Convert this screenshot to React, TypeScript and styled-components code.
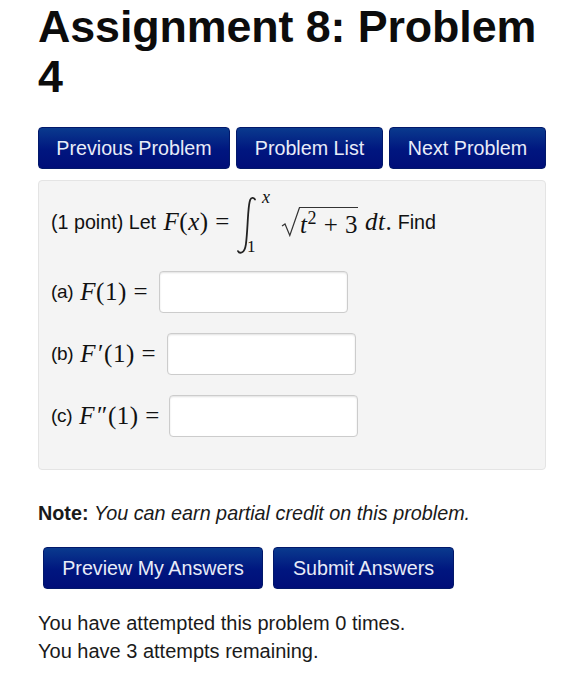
import React from "react";
import styled, { createGlobalStyle } from "styled-components";

const Global = createGlobalStyle`
  html, body { margin: 0; padding: 0; background: #fff; }
  body { font-family: "Liberation Sans", Arial, sans-serif; color: #111; }
`;
const Page = styled.div`
  width: 576px; height: 700px; box-sizing: border-box; padding: 1px 30px 0 38px; overflow: hidden;
`;
const Title = styled.h1`
  margin: 0; font-size: 44.8px; line-height: 50px; font-weight: 700; color: #0c0c0c; letter-spacing: -0.1px;
`;
const NavRow = styled.div`
  display: flex; gap: 6px; margin-top: 26px;
`;
const Button = styled.button<{ $w: number }>`
  width: ${p => p.$w}px; height: 42px; box-sizing: border-box; padding: 0;
  border: 1px solid #02186a; border-radius: 4px;
  background: linear-gradient(#0a3a8e, #00167f 55%, #000e78);
  color: #e8ecf8; font: 400 19.7px "Liberation Sans", Arial, sans-serif;
`;
const Well = styled.div`
  margin-top: 11px; width: 508px; height: 290px; box-sizing: border-box;
  background: #f4f4f4; border: 1px solid #e4e4e4; border-radius: 4px;
  padding: 0 12px; display: flex; flex-direction: column;
`;
const Statement = styled.div`
  display: flex; align-items: center; height: 80px; margin: 1px 0 9px; font-size: 19.7px; white-space: pre;
`;
const M = styled.span`
  font: 25px "Liberation Serif", "Times New Roman", serif; letter-spacing: 0.5px; margin-left: 2px; white-space: pre;
`;
const I = styled.i`font-style: italic;`;
const Prime = styled.span`
  margin-left: 2px;
`;
const Sup = styled.span`
  font-size: 18px; position: relative; top: -9px;
`;
const IntegralBox = styled.span`
  display: inline-flex; width: 36px; height: 58px; margin: 6px 12px 0 3px; align-items: flex-start; position: relative;
`;
const LimitTop = styled.i`
  position: absolute; left: 29px; top: -9px; font: italic 18px "Liberation Serif", serif;
`;
const LimitBottom = styled.span`
  position: absolute; left: 14px; bottom: -3px; font: 17px "Liberation Serif", serif;
`;
const Root = styled.span`
  display: inline-flex; align-items: flex-end; height: 30px; margin-right: 5px;
`;
const Radicand = styled.span`
  border-top: 1px solid #333; height: 29px; font: 25px/33px "Liberation Serif", serif; letter-spacing: 0.5px; white-space: pre;
`;
const Row = styled.div`
  display: flex; align-items: center; height: 42px; margin-bottom: 20px; font-size: 19px; letter-spacing: -0.3px; white-space: pre;
`;
const Answer = styled.input<{ $left: number }>`
  width: 189px; height: 42px; box-sizing: border-box; margin-left: ${p => p.$left}px;
  background: #fff; border: 1px solid #ccc; border-radius: 4px; padding: 0;
  box-shadow: inset 0 1px 2px rgba(0,0,0,.12);
`;
const Note = styled.p`
  margin: 31px 0 0; font-size: 19.8px; line-height: 24px; color: #1a1a1a;
  b { font-weight: 700; } i { font-style: italic; }
`;
const ActionRow = styled.div`
  display: flex; gap: 10px; margin: 22px 0 0 5px;
`;
const Status = styled.p`
  margin: 20px 0 0; font-size: 20px; line-height: 28px; color: #1a1a1a;
`;

export default function App() {
  return (
    <Page>
      <Global />
      <Title>Assignment 8: Problem<br />4</Title>
      <NavRow>
        <Button $w={192}>Previous Problem</Button>
        <Button $w={147}>Problem List</Button>
        <Button $w={157}>Next Problem</Button>
      </NavRow>
      <Well>
        <Statement>
          (1 point) Let <M><I>F</I>(<I>x</I>) =</M>
          <IntegralBox>
            <svg width="24" height="58" viewBox="0 0 24 58">
              <path d="M22 3.500c-1.500-2.300-3.800-2-4.800.3-1.300 3-1.600 9-2.100 15.500-.7 10-1 20-2.200 29-.6 4-1.800 7-3.800 8-1.600.8-3.400.2-4.100-1.200" fill="none" stroke="#222" strokeWidth="1.800" strokeLinecap="round" />
            </svg>
            <LimitTop>x</LimitTop>
            <LimitBottom>1</LimitBottom>
          </IntegralBox>
          <Root>
            <svg width="19" height="30" viewBox="0 0 19 30">
              <path d="M1 19l3-2 4.800 11.500L18.500 .5H19" fill="none" stroke="#333" strokeWidth="1.200" />
            </svg>
            <Radicand><I>t</I><Sup>2</Sup> + 3</Radicand>
          </Root>
          <M><I>dt</I>.</M> Find
        </Statement>
        <Row>(a) <M><I>F</I>(1) =</M><Answer $left={11} /></Row>
        <Row>(b) <M><I>F</I><Prime>′</Prime>(1) =</M><Answer $left={11} /></Row>
        <Row>(c) <M><I>F</I><Prime>″</Prime>(1) =</M><Answer $left={9} /></Row>
      </Well>
      <Note><b>Note:</b> <i>You can earn partial credit on this problem.</i></Note>
      <ActionRow>
        <Button $w={220}>Preview My Answers</Button>
        <Button $w={181}>Submit Answers</Button>
      </ActionRow>
      <Status>You have attempted this problem 0 times.<br />You have 3 attempts remaining.</Status>
    </Page>
  );
}
